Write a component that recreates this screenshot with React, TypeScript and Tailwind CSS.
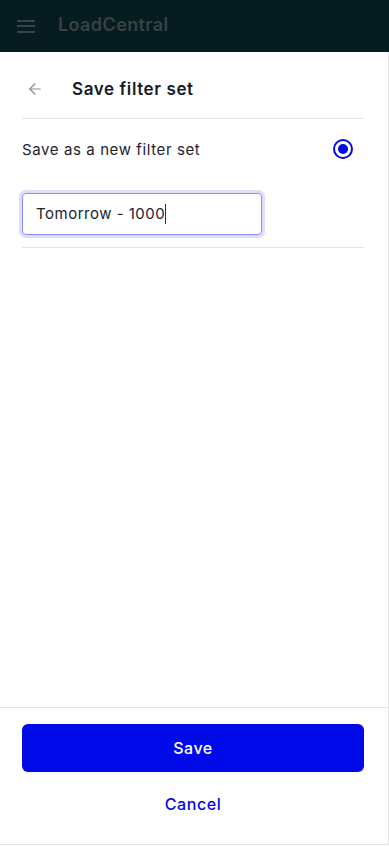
import { ArrowLeft } from "lucide-react"

export default function App() {
    return (
        <div className="w-[389px] h-[846px] bg-white overflow-hidden flex flex-col font-['Inter',sans-serif]">
            {/* Dimmed app header */}
            <header className="h-[52px] shrink-0 bg-[#061c20] flex items-center pl-[17px] gap-[23px]">
                <div className="flex flex-col gap-[3.5px]">
                    <span className="block w-[18px] h-[2px] bg-[#3a4444]" />
                    <span className="block w-[18px] h-[2px] bg-[#3a4444]" />
                    <span className="block w-[18px] h-[2px] bg-[#3a4444]" />
                </div>
                <span className="-mt-[3px] text-[18px] font-semibold text-[#394242] tracking-[0.4px]">LoadCentral</span>
            </header>

            {/* Drawer */}
            <div className="w-[389px] h-[793px] flex flex-col border-r border-b border-[#e2e2e2]">
                <div className="flex-1 pl-[22px] pr-[24px]">
                    <div className="flex items-center pt-[24px] pb-[16px] border-b border-[#e4e4e4]">
                        <button className="w-[50px] h-[26px] flex items-center pl-[4px] text-[#8a8a8a]">
                            <ArrowLeft size={18} strokeWidth={1.5} />
                        </button>
                        <h1 className="text-[17px] leading-[26px] font-semibold text-[#161b2b] tracking-[0.6px]">Save filter set</h1>
                    </div>

                    <div className="flex items-center justify-between pt-[20px] pb-[10px]">
                        <span className="text-[15px] leading-[22px] text-[#1d2230] tracking-[0.6px]">Save as a new filter set</span>
                        <span className="-mt-[2px] mr-[11px] w-[20px] h-[20px] rounded-full border-[2.5px] border-[#0009e8] flex items-center justify-center">
                            <span className="w-[10px] h-[10px] rounded-full bg-[#0009e8]" />
                        </span>
                    </div>

                    <div className="pt-[22px] pb-[12px] border-b border-[#e4e4e4]">
                        <div className="w-[240px] h-[42px] rounded-[4px] border border-[#8c8cf2] ring-[3px] ring-[#dedefc] flex items-center px-[13px]">
                            <span className="text-[15px] text-[#1d2230] tracking-[0.5px]">Tomorrow - 1000</span>
                            <span className="w-px h-[20px] bg-[#1a1ae8]" />
                        </div>
                    </div>
                </div>

                <footer className="h-[137px] shrink-0 border-t border-[#e4e4e4] pl-[22px] pr-[24px] pt-[16px] flex flex-col items-stretch">
                    <button className="h-[48px] rounded-[6px] bg-[#0009e8] text-white text-[16px] font-medium tracking-[0.5px]">Save</button>
                    <button className="mt-[20px] h-[24px] text-[16px] font-medium text-[#0009e8] tracking-[0.6px]">Cancel</button>
                </footer>
            </div>
        </div>
    )
}
